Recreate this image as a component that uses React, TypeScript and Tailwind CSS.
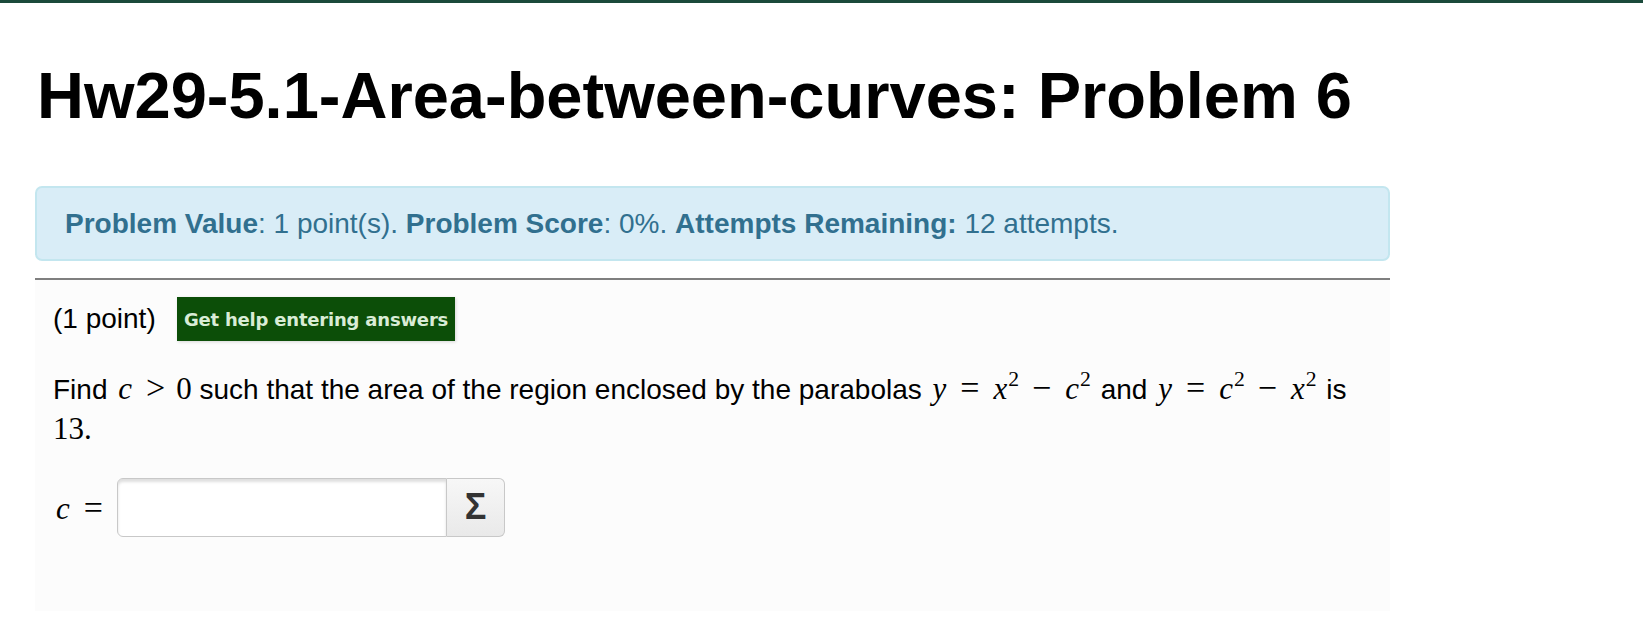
import React from "react";

const V = ({ children }: { children: React.ReactNode }) => <span className="italic px-[3px]">{children}</span>;
const Rel = ({ children }: { children: React.ReactNode }) => <span className="mx-[11px] text-[34px]">{children}</span>;
const Bin = ({ children }: { children: React.ReactNode }) => <span className="mx-[11px] text-[34px]">{children}</span>;
const Sup = ({ children }: { children: React.ReactNode }) => (
  <span className="relative -top-[0.62em] text-[0.7em] -ml-[2px] mr-[2px]">{children}</span>
);

export default function App() {
  const m = "font-['Liberation_Serif',serif] text-[31px] leading-none";
  return (
    <div className="min-h-[621px] bg-white font-['Liberation_Sans',Arial,sans-serif]">
      <div className="h-[3px] bg-[#1b4a3b]" />
      <div className="w-[1355px] ml-[35px]">
        <h1 className="mt-[57px] text-[65px] leading-[72px] font-bold text-black ml-[2px]">
          Hw29-5.1-Area-between-curves: Problem 6
        </h1>
        <div className="mt-[54px] h-[75px] rounded-[7px] border-2 border-[#c3e6ef] bg-[#d9edf7] pl-[28px] flex items-center text-[28px] text-[#31708f]">
          <span>
            <b>Problem Value</b>: 1 point(s). <b>Problem Score</b>: 0%. <b>Attempts Remaining:</b> 12 attempts.
          </span>
        </div>
        <div className="mt-[17px] h-[2px] bg-[#7f7f7f]" />
        <div className="h-[331px] bg-[#fcfcfc] px-[18px] pt-[17px] text-[28px] text-black">
          <div className="flex items-center h-[44px]">
            <span className="w-[124px]">(1 point)</span>
            <span className="h-[44px] w-[278px] flex items-center justify-center bg-[#0c4e08] text-[#d9ecd6] text-[18px] font-bold font-['DejaVu_Sans',sans-serif] tracking-[-0.2px] shadow-[1px_1px_3px_rgba(0,0,0,0.15)]">
              Get help entering answers
            </span>
          </div>
          <p className="mt-[29px] leading-[40px]">
            Find{" "}
            <span className={m}>
              <V>c</V>
              <Rel>&gt;</Rel>0
            </span>{" "}
            such that the area of the region enclosed by the parabolas{" "}
            <span className={m}>
              <V>y</V>
              <Rel>=</Rel>
              <V>x</V>
              <Sup>2</Sup>
              <Bin>−</Bin>
              <V>c</V>
              <Sup>2</Sup>
            </span>{" "}
            and{" "}
            <span className={m}>
              <V>y</V>
              <Rel>=</Rel>
              <V>c</V>
              <Sup>2</Sup>
              <Bin>−</Bin>
              <V>x</V>
              <Sup>2</Sup>
            </span>{" "}
            is <span className={m}>13.</span>
          </p>
          <div className="mt-[28px] flex items-center">
            <span className={m + " w-[64px]"}>
              <V>c</V>
              <Rel>=</Rel>
            </span>
            <div className="flex h-[59px]">
              <div className="w-[330px] rounded-l-[6px] border border-[#c8c8c8] bg-white shadow-[inset_0_3px_3px_rgba(0,0,0,0.13)]" />
              <div className="w-[58px] rounded-r-[6px] border border-l-0 border-[#c8c8c8] bg-gradient-to-b from-[#f7f7f7] to-[#e9e9e9] flex items-center justify-center text-[36px] leading-none font-bold text-[#333] pb-[2px]">
                Σ
              </div>
            </div>
          </div>
        </div>
      </div>
    </div>
  );
}
